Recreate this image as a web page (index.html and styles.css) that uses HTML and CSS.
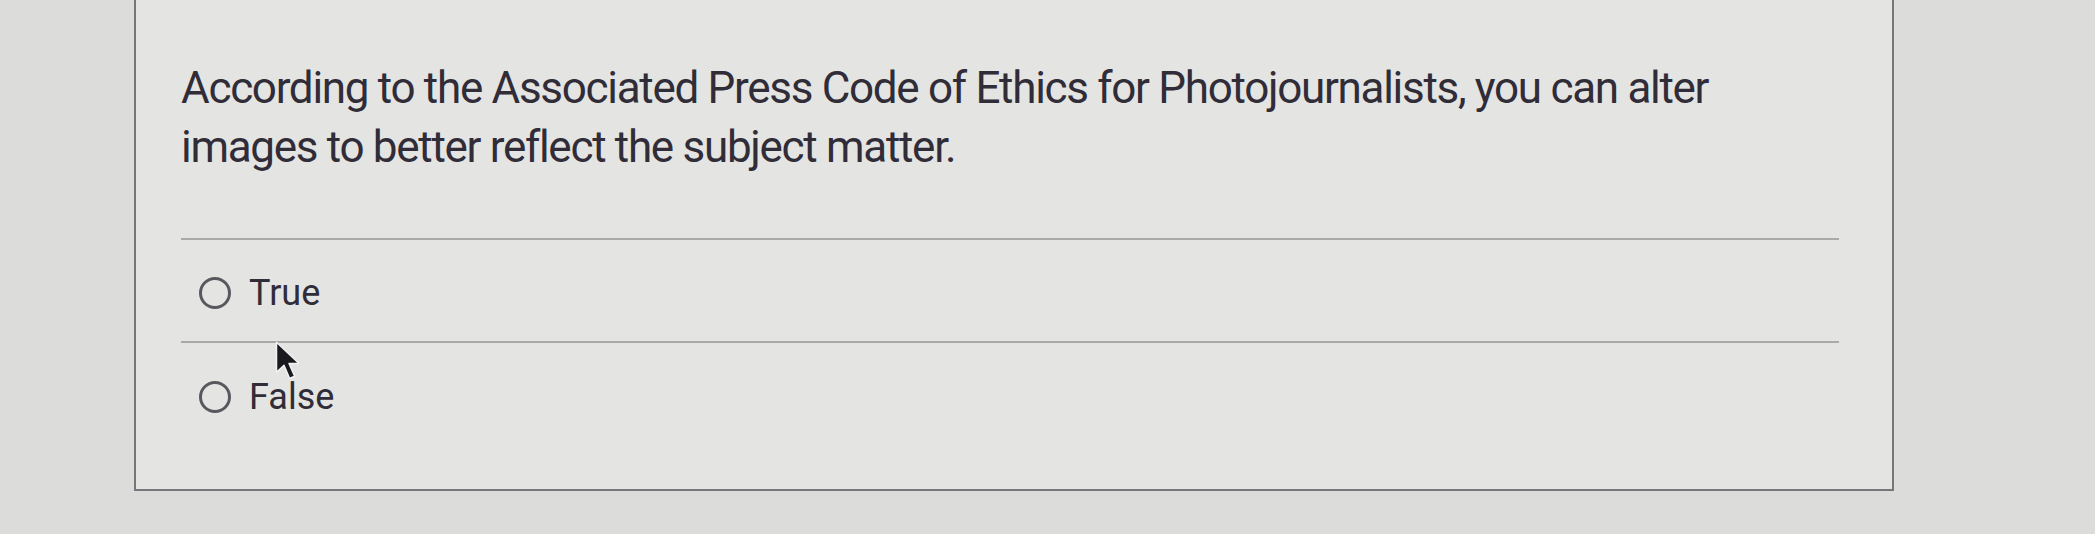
FILE: index.html
```html
<!DOCTYPE html>
<html lang="en">
<head>
    <meta charset="UTF-8">
    <title>Quiz Question</title>
    <link rel="stylesheet" href="styles.css">
</head>
<body>
    <div class="question-card">
        <p class="question-text">According to the Associated Press Code of Ethics for Photojournalists, you can alter images to better reflect the subject matter.</p>

        <div class="answers">
            <label class="answer">
                <span class="radio"></span>
                <span class="answer-label">True</span>
            </label>
            <label class="answer">
                <span class="radio"></span>
                <span class="answer-label">False</span>
                <!-- mouse pointer -->
                <svg class="cursor" width="28" height="40" viewBox="0 0 22 32">
                    <path d="M1 1 L1 25 L7 19.5 L11.5 30 L15.5 28.2 L11 18 L19 18 Z" fill="#1a1a1e" stroke="#f2f2f2" stroke-width="1.2" stroke-linejoin="round"/>
                </svg>
            </label>
        </div>
    </div>
</body>
</html>
```

FILE: styles.css
```css
/* Reset */
* {
    margin: 0;
    padding: 0;
    box-sizing: border-box;
}

:root {
    --page-bg: #dcdcda;
    --card-bg: #e4e4e2;
    --card-border: #77767c;
    --divider: #a9a9a9;
    --text-color: #302c38;
}

body {
    background-color: var(--page-bg);
    font-family: Roboto, "Liberation Sans", sans-serif;
    color: var(--text-color);
    height: 534px;
    overflow: hidden;
}

/* Kartu soal */
.question-card {
    margin-left: 134px;
    width: 1760px;
    height: 491px;
    background-color: var(--card-bg);
    border: 2px solid var(--card-border);
    border-top: none;
    padding: 59px 53px 0 45px;
}

.question-text {
    font-size: 44px;
    line-height: 59px;
    letter-spacing: -1.3px;
    max-width: 1560px;
}

/* Pilihan jawaban */
.answers {
    margin-top: 61px;
    border-top: 2px solid var(--divider);
}

.answer {
    position: relative;
    display: flex;
    align-items: center;
    gap: 18px;
    height: 103px;
    padding-left: 18px;
    padding-top: 4px;
    border-bottom: 2px solid var(--divider);
}

.answer:last-child {
    border-bottom: none;
}

.radio {
    width: 32px;
    height: 32px;
    border: 3px solid #5a585f;
    border-radius: 50%;
    flex-shrink: 0;
}

.answer-label {
    font-size: 36px;
}

.cursor {
    position: absolute;
    left: 94px;
    top: -2px;
}
```
